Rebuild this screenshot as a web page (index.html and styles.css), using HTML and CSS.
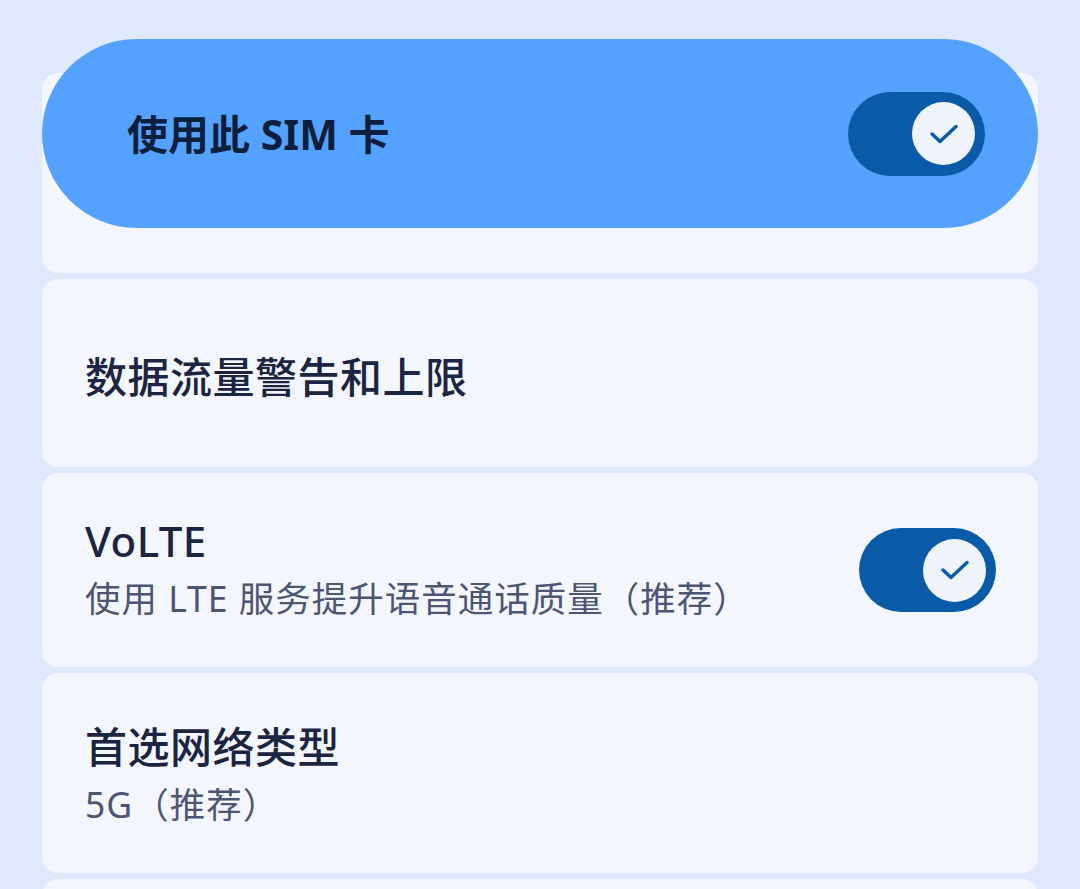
FILE: index.html
```html
<!DOCTYPE html>
<html lang="zh-CN">
<head>
<meta charset="utf-8">
<link rel="stylesheet" href="styles.css">
</head>
<body>
<div class="screen">
  <div class="list">
    <div class="card card-1"></div>
    <div class="card card-2">
      <div class="text">
        <div class="title">数据流量警告和上限</div>
      </div>
    </div>
    <div class="card card-3">
      <div class="text">
        <div class="title">VoLTE</div>
        <div class="sub">使用 LTE 服务提升语音通话质量（推荐）</div>
      </div>
      <div class="switch">
        <div class="thumb">
          <svg viewBox="0 0 28 20" width="28" height="20"><path d="M2 10 L10 17.5 L26 2.5" fill="none" stroke="#0a5ba7" stroke-width="3.4" stroke-linecap="round" stroke-linejoin="round"/></svg>
        </div>
      </div>
    </div>
    <div class="card card-4">
      <div class="text">
        <div class="title">首选网络类型</div>
        <div class="sub">5G（推荐）</div>
      </div>
    </div>
    <div class="card card-5"></div>
  </div>

  <div class="pill">
    <div class="pill-title">使用此 SIM 卡</div>
    <div class="switch">
      <div class="thumb">
        <svg viewBox="0 0 28 20" width="28" height="20"><path d="M2 10 L10 17.5 L26 2.5" fill="none" stroke="#0a5ba7" stroke-width="3.4" stroke-linecap="round" stroke-linejoin="round"/></svg>
      </div>
    </div>
  </div>
</div>
</body>
</html>
```

FILE: styles.css
```css
* { box-sizing: border-box; }
html, body {
  margin: 0;
  padding: 0;
  background: #dfe8fc;
  font-family: "Noto Sans", "Noto Sans CJK SC", sans-serif;
}
.screen {
  position: relative;
  width: 1080px;
  height: 889px;
  overflow: hidden;
}
.list {
  display: flex;
  flex-direction: column;
  gap: 6px;
  padding: 73px 42px 0 42px;
}
.card {
  background: #f4f6fe;
  border-radius: 16px;
  display: flex;
  align-items: center;
  justify-content: space-between;
  padding: 0 42px 0 43px;
}
.card-1 { height: 200px; }
.card-2 { height: 188px; padding-top: 8px; }
.card-3 { height: 194px; }
.card-4 { height: 200px; padding-top: 6px; }
.card-5 { height: 60px; }
.title {
  font-size: 42px;
  font-weight: 500;
  color: #1b2440;
  line-height: 56px;
  letter-spacing: 0.5px;
}
.sub {
  font-size: 35.5px;
  font-weight: 400;
  color: #4c5672;
  line-height: 58px;
  letter-spacing: 1px;
}
.switch {
  width: 137px;
  height: 84px;
  border-radius: 42px;
  background: #0a5ba7;
  display: flex;
  align-items: center;
  justify-content: flex-end;
  padding-right: 10px;
  flex-shrink: 0;
}
.thumb {
  width: 63px;
  height: 63px;
  border-radius: 50%;
  background: #eef3fc;
  display: flex;
  align-items: center;
  justify-content: center;
}
.thumb svg { display: block; }
.pill {
  position: absolute;
  left: 42px;
  top: 39px;
  width: 996px;
  height: 189px;
  border-radius: 95px;
  background: #55a2fe;
  display: flex;
  align-items: center;
  justify-content: space-between;
  padding: 0 53px 0 85px;
}
.pill-title {
  font-size: 41px;
  font-weight: 700;
  color: #0c1f3c;
  line-height: 56px;
}
```
